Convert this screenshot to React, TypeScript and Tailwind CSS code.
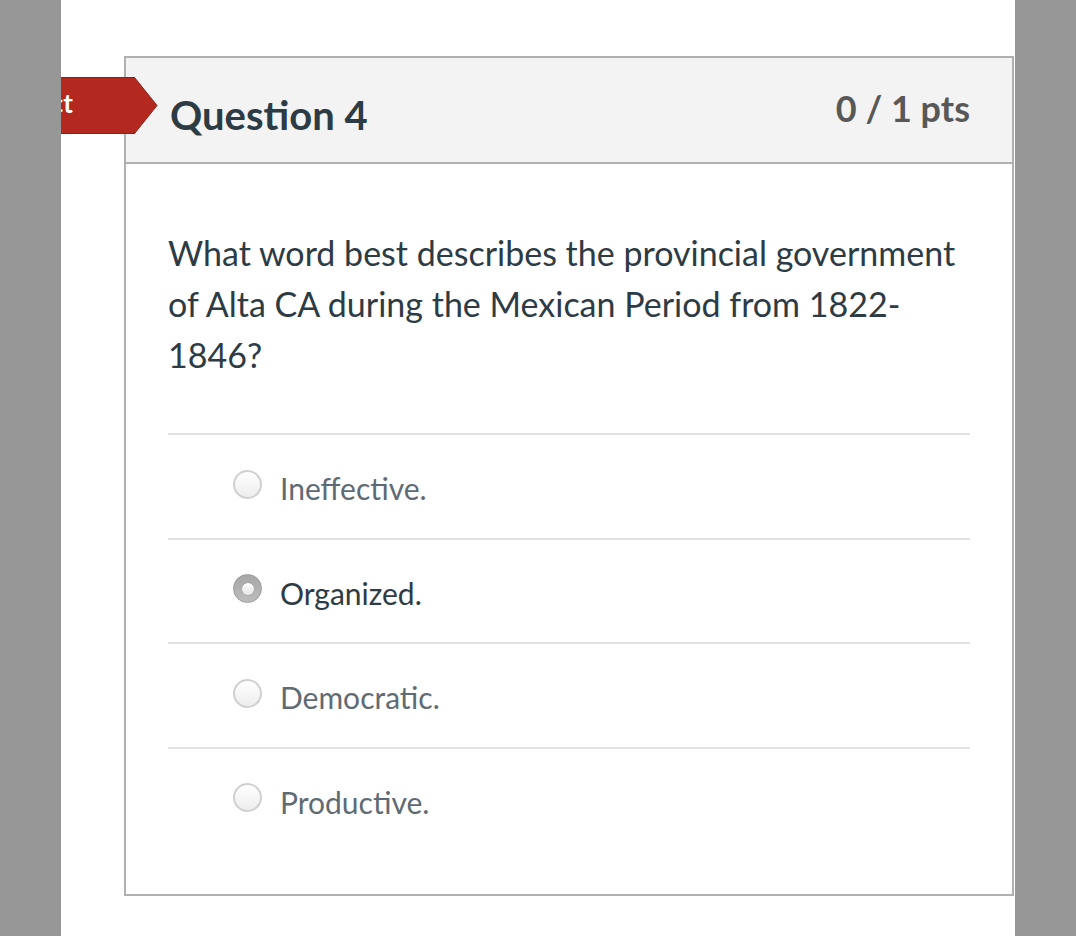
import React from "react";

const options = [
  { label: "Ineffective.", selected: false },
  { label: "Organized.", selected: true },
  { label: "Democratic.", selected: false },
  { label: "Productive.", selected: false },
];

function Radio({ selected }: { selected: boolean }) {
  if (selected) {
    return (
      <div className="flex h-[29px] w-[29px] shrink-0 items-center justify-center rounded-full border border-[#9a9a9a] bg-[linear-gradient(180deg,#a6a6a6,#bdbdbd)]">
        <div className="h-[12px] w-[12px] rounded-full bg-[linear-gradient(180deg,#ffffff,#e6e6e6)] shadow-[0_0_1px_rgba(0,0,0,0.3)]" />
      </div>
    );
  }
  return (
    <div className="h-[29px] w-[29px] shrink-0 rounded-full border-2 border-[#d0d0d0] bg-[linear-gradient(180deg,#ffffff,#ededed)]" />
  );
}

export default function App() {
  return (
    <div
      className="flex h-[936px] w-[1076px] overflow-hidden bg-white"
      style={{ fontFamily: "Lato, 'Open Sans', sans-serif" }}
    >
      <div className="w-[61px] shrink-0 bg-[#979797]" />
      <div className="relative flex-1 overflow-hidden bg-white pl-[63px] pt-[56px]">
        {/* ribbon */}
        <div className="absolute left-0 top-[77px] z-10 flex h-[57px] items-stretch">
          <div className="relative -ml-[40px] flex w-[114px] items-center justify-end overflow-hidden border-y border-[#8e1f18] bg-[#b3281f] pr-[62px] text-[26px] font-bold text-white">
            <span className="-mt-[4px]">Incorrect</span>
          </div>
          <svg width="24" height="57" viewBox="0 0 24 57" className="-ml-px block">
            <polygon points="0,0 0.5,0.5 23,28.5 0.5,56.5 0,57" fill="#b3281f" stroke="#8e1f18" strokeWidth="1" />
            <line x1="0.5" y1="1" x2="0.5" y2="56" stroke="#c8463c" strokeWidth="1" />
          </svg>
        </div>

        <div className="w-[890px] border-2 border-[#b0b0b0] bg-white">
          <div className="flex h-[106px] items-start justify-between border-b-2 border-[#b0b0b0] bg-[#f3f3f3] pl-[44px] pr-[42px]">
            <h2 className="mt-[33px] text-[40px] font-bold leading-[48px] text-[#2d3b45]">
              Question 4
            </h2>
            <div className="mt-[28px] text-[36px] font-bold leading-[44px] text-[#585858]">
              0 / 1 pts
            </div>
          </div>
          <div className="px-[42px] pb-[43px] pt-[63px]">
            <p className="text-[34px] leading-[51px] text-[#2d3b45]">
              What word best describes the provincial government of Alta CA during the Mexican Period from 1822-1846?
            </p>
            <div className="mt-[53px]">
              {options.map((o) => (
                <div
                  key={o.label}
                  className="flex h-[104.5px] items-center border-t-2 border-[#e2e2e2] pl-[65px] pt-[4px]"
                >
                  <div className="flex items-center gap-[18px]">
                    <div className="-mt-[8px]">
                      <Radio selected={o.selected} />
                    </div>
                    <span
                      className={
                        "text-[30px] leading-[40px] " +
                        (o.selected ? "text-[#2d3b45]" : "text-[#5f6b74]")
                      }
                    >
                      {o.label}
                    </span>
                  </div>
                </div>
              ))}
            </div>
          </div>
        </div>
      </div>
      <div className="w-[61px] shrink-0 bg-[#979797]" />
    </div>
  );
}
